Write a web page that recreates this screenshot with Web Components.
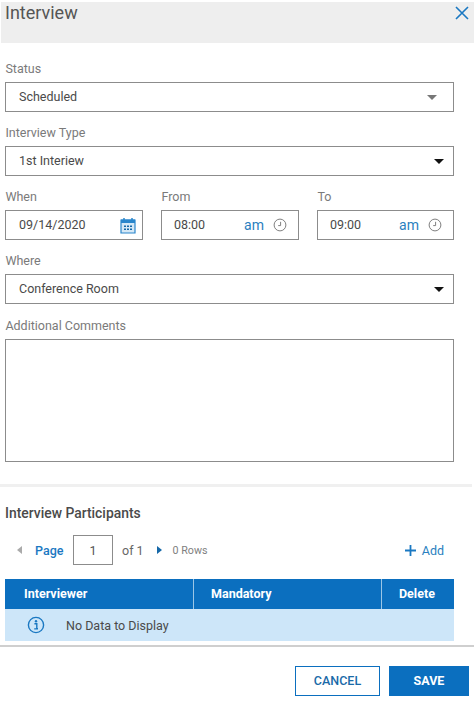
<!DOCTYPE html>
<html><head><meta charset="utf-8"><style>
html,body{margin:0;padding:0;background:#fff;overflow:hidden}
body{width:474px;height:703px;font-family:Roboto,sans-serif}
</style></head><body>
<interview-dialog></interview-dialog>
<script>
const cal='<svg width="16" height="17" viewBox="0 0 16 17"><path d="M1 3h14v13H1z" fill="#d5e8f6" stroke="#2a86cc" stroke-width="1.2"/><path d="M1 2.5h14V6H1z" fill="#2a86cc"/><path d="M4 1v2M12 1v2" stroke="#2a86cc" stroke-width="1.5"/><path d="M4 8.5h2v1.6H4zM7 8.5h2v1.6H7zM10 8.5h2v1.6h-2zM4 11.5h2v1.6H4zM7 11.5h2v1.6H7zM10 11.5h2v1.6h-2z" fill="#1568a8"/></svg>';
const clock='<svg width="14" height="14" viewBox="0 0 14 14"><circle cx="7" cy="7" r="5.9" fill="none" stroke="#808080" stroke-width="1"/><path d="M7.6 3.8V7.6H5.2" fill="none" stroke="#808080" stroke-width="1"/></svg>';
function def(name,css,html){
  customElements.define(name,class extends HTMLElement{
    connectedCallback(){
      if(this.shadowRoot)return;
      const r=this.attachShadow({mode:'open'});
      r.innerHTML='<style>'+css+'</style>'+html;
    }
  });
}
def('field-label',`:host{display:block;font-size:12.5px;line-height:16px;color:#7a7a7a;height:16px;margin-bottom:5px;padding-left:.4px}`,'<slot></slot>');
def('select-box',`:host{display:flex;align-items:center;justify-content:space-between;box-sizing:border-box;height:30px;border:1px solid #8c8c8c;padding:0 var(--pr,9px) 0 13px;font-size:12.5px;color:#4a4a4a;background:#fff}
span{padding-bottom:1px}i{display:block;width:0;height:0;border-left:5px solid transparent;border-right:5px solid transparent;border-top:5px solid var(--c,#111)}`,'<span><slot></slot></span><i></i>');
def('date-box',`:host{display:flex;align-items:center;justify-content:space-between;box-sizing:border-box;height:30px;border:1px solid #8c8c8c;padding:0 6px 0 13px;font-size:12.5px;color:#4a4a4a}span{padding-bottom:1px}svg{display:block}`,'<span><slot></slot></span>'+cal);
def('time-box',`:host{display:flex;align-items:center;box-sizing:border-box;height:30px;border:1px solid #8c8c8c;padding:0 11px 0 12px;font-size:12.5px;color:#4a4a4a}
span{flex:1;padding-bottom:1px}b{font-weight:400;font-size:14px;color:#2a7fc0;margin-right:9px}svg{display:block}`,'<span><slot></slot></span><b>am</b>'+clock);
def('dialog-header',`:host{display:flex;justify-content:space-between;box-sizing:border-box;height:41px;margin:2px 0 0 1px;background:#eeeeee;padding:0 5px 0 4px}
h1{margin:0;font-weight:400;font-size:18px;line-height:22px;color:#555}svg{display:block;margin-top:4px}`,
`<h1><slot></slot></h1><svg width="14" height="14" viewBox="0 0 14 14"><path d="M1 1l12 12M13 1L1 13" stroke="#1a78c2" stroke-width="1.6" fill="none"/></svg>`);
def('pager-bar',`:host{display:flex;align-items:center;height:30px;padding:0 10px 0 12px;font-size:12.5px;color:#666}
.l{width:0;height:0;border-top:4.5px solid transparent;border-bottom:4.5px solid transparent;border-right:5px solid #aaa;margin-right:13px}
.r{width:0;height:0;border-top:4.5px solid transparent;border-bottom:4.5px solid transparent;border-left:5px solid #1568a8;margin:0 11px 0 13px}
.p{color:#1a78c2;font-weight:500;margin-right:10px;width:28px}
.n{box-sizing:border-box;width:40px;height:30px;border:1px solid #8c8c8c;display:flex;align-items:center;justify-content:center;margin-right:9px;color:#555}
.rows{font-size:10.7px;color:#808080;flex:1}
.add{display:flex;align-items:center;gap:6px;color:#2a7fc0}svg{display:block}`,
`<div class="l"></div><span class="p">Page</span><div class="n">1</div><span>of 1</span><div class="r"></div><span class="rows">0 Rows</span><span class="add"><svg width="11" height="11" viewBox="0 0 11 11"><path d="M5.5 0v11M0 5.5h11" stroke="#1a78c2" stroke-width="1.8"/></svg>Add</span>`);
def('participants-table',`:host{display:block}
.h{display:grid;grid-template-columns:188px 188px 1fr;height:30px;background:#0b6fbf;color:#fff;font-weight:700}
.h div{display:flex;align-items:center;padding:0 0 1px 17px;border-left:1px solid #9cc6e6;font-size:12.5px}
.h div:first-child{border-left:0;padding-left:19px}
.b{display:flex;align-items:center;height:32px;background:#cde6f9;color:#4a4a4a;font-size:12.5px;padding-left:22px;gap:21px}svg{display:block}`,
`<div class="h"><div>Interviewer</div><div>Mandatory</div><div>Delete</div></div>
<div class="b"><svg width="18" height="18" viewBox="0 0 18 18"><circle cx="9" cy="9" r="7.6" fill="none" stroke="#1a78c2" stroke-width="1.4"/><circle cx="9" cy="5.3" r="1.2" fill="#1a78c2"/><path d="M7.4 7.8H9.8V12.6H11M7.2 12.9h3.8" fill="none" stroke="#1a78c2" stroke-width="1.4"/></svg><span>No Data to Display</span></div>`);
def('action-btn',`:host{display:flex;align-items:center;justify-content:center;box-sizing:border-box;height:30px;padding-bottom:1px;font-size:12.5px;font-weight:500;border:1px solid #0b6fbf;color:#1a6aa8;background:#fff}
:host([primary]){background:#0b6fbf;color:#fff;font-weight:700}`,'<slot></slot>');
def('interview-dialog',`:host{display:block;width:474px;height:703px;background:#fff}
.form{display:flex;flex-direction:column;padding:18px 20px 0 5px}
.g{margin-bottom:13px}.w{margin-bottom:14px}
.three{display:grid;grid-template-columns:138px 138px 137px;column-gap:18px;margin-bottom:13px}
.ta{box-sizing:border-box;height:123px;border:1px solid #8c8c8c}
.div{height:3px;background:#f0f0f0;margin:22px 2px 0 0}
h2{margin:0;font-size:13.9px;line-height:18px;font-weight:500;color:#4a4a4a;padding:17px 0 0 5px}
.part{padding:0 20px 0 5px}
pager-bar{margin:13px 0 14px}
.foot{margin-top:4px;border-top:2px solid #cfcfcf;display:flex;justify-content:flex-end;gap:9px;padding:19px 5px 0 0}
action-btn.c{width:85px}action-btn.s{width:80px}`,
`<dialog-header>Interview</dialog-header>
<div class="form">
<div class="g"><field-label>Status</field-label><select-box style="--c:#777;--pr:16px">Scheduled</select-box></div>
<div class="g"><field-label>Interview Type</field-label><select-box>1st Interiew</select-box></div>
<div class="three"><div><field-label>When</field-label><date-box>09/14/2020</date-box></div><div><field-label>From</field-label><time-box>08:00</time-box></div><div><field-label>To</field-label><time-box>09:00</time-box></div></div>
<div class="w"><field-label>Where</field-label><select-box>Conference Room</select-box></div>
<div><field-label>Additional Comments</field-label><div class="ta"></div></div>
</div>
<div class="div"></div>
<h2>Interview Participants</h2>
<div class="part"><pager-bar></pager-bar><participants-table></participants-table></div>
<div class="foot"><action-btn class="c">CANCEL</action-btn><action-btn class="s" primary>SAVE</action-btn></div>`);
</script></body></html>
